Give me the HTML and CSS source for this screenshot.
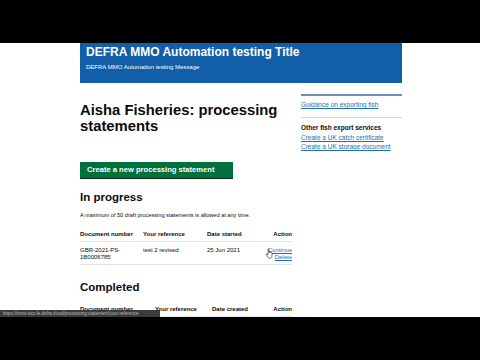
FILE: index.html
```html
<!DOCTYPE html>
<html lang="en">
<head>
    <meta charset="UTF-8">
    <meta name="viewport" content="width=device-width, initial-scale=1.0">
    <title>Aisha Fisheries: processing statements</title>
    <link rel="stylesheet" href="styles.css">
</head>
<body>
    <div class="letterbox"></div>

    <div class="screen">
        <div class="page">
            <header class="banner">
                <div class="banner-title">DEFRA MMO Automation testing Title</div>
                <div class="banner-message">DEFRA MMO Automation testing Message</div>
            </header>

            <div class="layout">
                <main class="main">
                    <h1>Aisha Fisheries: processing statements</h1>

                    <a class="button" href="#">Create a new processing statement</a>

                    <h2>In progress</h2>
                    <p class="hint">A maximum of 50 draft processing statements is allowed at any time.</p>

                    <table class="table progress">
                        <thead>
                            <tr>
                                <th class="col-doc">Document number</th>
                                <th class="col-ref">Your reference</th>
                                <th class="col-date">Date started</th>
                                <th class="col-action">Action</th>
                            </tr>
                        </thead>
                        <tbody>
                            <tr>
                                <td>GBR-2021-PS-1B0006785</td>
                                <td>test 2 revised</td>
                                <td>25 Jun 2021</td>
                                <td class="col-action">
                                    <a href="#">Continue</a><br>
                                    <a href="#">Delete</a>
                                </td>
                            </tr>
                        </tbody>
                    </table>

                    <h2 class="completed">Completed</h2>

                    <table class="table done">
                        <thead>
                            <tr>
                                <th class="col-doc">Document number</th>
                                <th class="col-ref">Your reference</th>
                                <th class="col-date">Date created</th>
                                <th class="col-action">Action</th>
                            </tr>
                        </thead>
                    </table>
                </main>

                <aside class="related">
                    <a class="related-link" href="#">Guidance on exporting fish</a>
                    <div class="related-sep"></div>
                    <div class="related-title">Other fish export services</div>
                    <a class="related-link" href="#">Create a UK catch certificate</a>
                    <a class="related-link" href="#">Create a UK storage document</a>
                </aside>
            </div>
        </div>

        <!-- mouse pointer over "Continue" -->
        <svg class="cursor" width="9" height="11" viewBox="0 0 9 11">
            <path d="M3 1.2c0-.6.9-.6.9 0V5l.3-.9c.2-.5.9-.4.9.1l.1.3c.2-.5.9-.4.9.1v.3c.3-.4.9-.2.9.3v2.6c0 1.3-.9 2.4-2.2 2.4H4.3c-.7 0-1.2-.3-1.6-.9L1.2 6.6c-.3-.5.3-1 .8-.6L3 7V1.2z" fill="#fff" stroke="#222" stroke-width=".6"/>
        </svg>

        <div class="status">https://mmo-ecc-fe.defra.cloud/processing-statement/your-reference</div>
    </div>

    <div class="letterbox"></div>
</body>
</html>
```

FILE: styles.css
```css
html, body {
    margin: 0;
    padding: 0;
}
body {
    background: #000;
    width: 480px;
    height: 360px;
    overflow: hidden;
    font-family: 'Liberation Sans', Arial, sans-serif;
    color: #0b0c0c;
}
.letterbox {
    height: 43px;
    background: #000;
}
.screen {
    position: relative;
    height: 274px;
    background: #fff;
    overflow: hidden;
}
.page {
    width: 322px;
    margin-left: 80px;
}

/* banner */
.banner {
    height: 40px;
    box-sizing: border-box;
    padding: 2px 6px 0;
    background: #135ea8;
    color: #fff;
}
.banner-title {
    font-size: 12px;
    line-height: 14px;
    font-weight: bold;
}
.banner-message {
    margin-top: 4px;
    font-size: 6px;
    line-height: 8px;
}

/* two columns */
.layout {
    display: flex;
    gap: 9px;
    padding-top: 11px;
}
.main {
    width: 212px;
}
.related {
    width: 101px;
    border-top: 2px solid #6d8fb0;
    padding-top: 4px;
}

h1 {
    margin: 8px 0 0;
    font-size: 14.8px;
    line-height: 16px;
    font-weight: bold;
}
.button {
    display: block;
    width: 153px;
    height: 16px;
    box-sizing: border-box;
    margin-top: 28px;
    padding-left: 7px;
    background: #00703c;
    box-shadow: 0 1px 0 #002d18;
    color: #fff;
    font-size: 7.6px;
    line-height: 16px;
    font-weight: bold;
    text-decoration: none;
}
h2 {
    margin: 13px 0 0;
    font-size: 11.5px;
    line-height: 13px;
    font-weight: bold;
}
h2.completed {
    margin-top: 16px;
}
.hint {
    margin: 7px 0 0;
    font-size: 5.6px;
    line-height: 8px;
}

/* tables */
.table {
    width: 212px;
    margin-top: 12px;
    border-collapse: collapse;
    font-size: 6px;
    line-height: 7px;
}
.table th {
    text-align: left;
    font-weight: bold;
    padding: 0 0 3px;
    border-bottom: 1px solid #e3e4e5;
}
.table td {
    vertical-align: top;
    padding: 5px 4px 3px 0;
    border-bottom: 1px solid #e3e4e5;
}
.table .col-action {
    text-align: right;
    padding-right: 0;
}
.progress .col-doc { width: 63px; }
.progress .col-ref { width: 64px; }
.done .col-doc { width: 75px; }
.done .col-ref { width: 57px; }
.done .col-date { width: 61px; }
.table a {
    color: #1d70b8;
}

/* related items */
.related-link {
    display: block;
    color: #1d70b8;
    font-size: 6.5px;
    line-height: 9px;
}
.related-sep {
    margin: 8px 0 5px;
    border-top: 1px solid #d6d8da;
}
.related-title {
    font-size: 6.5px;
    line-height: 9px;
    font-weight: bold;
    margin-bottom: 1px;
}

.cursor {
    position: absolute;
    left: 265px;
    top: 205px;
}
.status {
    position: absolute;
    left: 0;
    bottom: 0;
    width: 160px;
    height: 7px;
    padding-left: 3px;
    box-sizing: border-box;
    background: #3b3b3b;
    color: #bcbcbc;
    font-size: 4.5px;
    line-height: 7px;
    white-space: nowrap;
}
```
